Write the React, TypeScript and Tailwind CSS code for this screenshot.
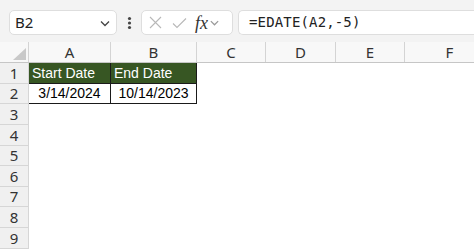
import React from "react";

const cols = [
  { l: "A", w: 82 },
  { l: "B", w: 86 },
  { l: "C", w: 69 },
  { l: "D", w: 70 },
  { l: "E", w: 69 },
  { l: "F", w: 90 },
];
const rowH = [21, 20, 21, 21, 20, 21, 20, 21, 21];

const ui = { fontFamily: '"Noto Sans", "Open Sans", sans-serif' };
const arial = { fontFamily: '"Liberation Sans", Arial, sans-serif' };

function Chevron({ c = "#555", s = 12 }: { c?: string; s?: number }) {
  return (
    <svg width={s} height={s} viewBox="0 0 12 12">
      <path d="M2 4.5 L6 8.5 L10 4.5" fill="none" stroke={c} strokeWidth="1.3" />
    </svg>
  );
}

export default function App() {
  return (
    <div className="w-[474px] h-[250px] overflow-hidden bg-white" style={ui}>
      {/* top bar */}
      <div className="h-[42px] bg-[#f3f3f3] flex items-start pt-[10px] pl-[9px]">
        <div className="w-[108px] h-[25px] bg-white border border-[#dedede] rounded-[5px] flex items-center justify-between pl-[5px] pr-[5px] text-[15px] text-[#222]">
          <span>B2</span>
          <Chevron c="#444" />
        </div>
        <div className="w-[24px] h-[25px] flex items-center justify-center">
          <svg width="5" height="14" viewBox="0 0 5 14">
            <circle cx="2.5" cy="2.5" r="1.6" fill="#444" />
            <circle cx="2.5" cy="7" r="1.6" fill="#444" />
            <circle cx="2.5" cy="11.5" r="1.6" fill="#444" />
          </svg>
        </div>
        <div className="w-[92px] h-[25px] bg-white border border-[#dedede] rounded-[5px] flex items-center pl-[7px]">
          <svg width="13" height="13" viewBox="0 0 13 13">
            <path d="M1 1 L12 12 M12 1 L1 12" stroke="#b8b8b8" strokeWidth="1.1" />
          </svg>
          <svg width="15" height="12" viewBox="0 0 15 12" className="ml-[10px]">
            <path d="M1 6.5 L5 10.5 L14 1.5" fill="none" stroke="#b8b8b8" strokeWidth="1.1" />
          </svg>
          <span
            className="ml-[8px] text-[18px] italic text-[#333] leading-none"
            style={{ fontFamily: '"Liberation Serif", "DejaVu Serif", serif' }}
          >
            fx
          </span>
          <span className="ml-[1px] flex items-center">
            <Chevron c="#999" s={11} />
          </span>
        </div>
        <div
          className="ml-[5px] flex-1 h-[25px] bg-white border border-r-0 border-[#dedede] rounded-l-[5px] flex items-center pl-[10px] text-[14px] text-[#222]"
          style={{ fontFamily: '"DejaVu Sans Mono", monospace', letterSpacing: "0.15px" }}
        >
          =EDATE(A2,-5)
        </div>
      </div>

      {/* column headers */}
      <div className="flex h-[21px] border-b border-[#c6c6c6] bg-[#f8f8f8] text-[15px] text-[#333]">
        <div className="w-[29px] shrink-0 border-r border-[#d4d4d4] flex items-end justify-end pr-[2px] pb-[2px]">
          <svg width="13" height="12" viewBox="0 0 13 12">
            <path d="M13 0 L13 12 L0 12 Z" fill="#c9c9c9" />
          </svg>
        </div>
        {cols.map((c) => (
          <div
            key={c.l}
            className="shrink-0 border-r border-[#d4d4d4] flex items-center justify-center leading-none"
            style={{ width: c.w }}
          >
            {c.l}
          </div>
        ))}
      </div>

      {/* rows */}
      {rowH.map((h, i) => {
        const r = i + 1;
        return (
          <div key={r} className="flex" style={{ height: h }}>
            <div className="w-[29px] shrink-0 bg-[#f0f0f0] border-r border-b border-[#d6d6d6] flex items-center justify-center text-[15px] text-[#333] leading-none">
              {r}
            </div>
            {r === 1 && (
              <>
                <div
                  className="w-[82px] shrink-0 bg-[#375623] text-white text-[14px] flex items-center pl-[3px] border-r border-b border-[#1a1a1a]"
                  style={arial}
                >
                  Start Date
                </div>
                <div
                  className="w-[86px] shrink-0 bg-[#375623] text-white text-[14px] flex items-center pl-[3px] border-r border-b border-[#1a1a1a]"
                  style={arial}
                >
                  End Date
                </div>
              </>
            )}
            {r === 2 && (
              <>
                <div
                  className="w-[82px] shrink-0 text-black text-[14px] flex items-center justify-center border-r border-b border-[#1a1a1a]"
                  style={arial}
                >
                  3/14/2024
                </div>
                <div
                  className="w-[86px] shrink-0 text-black text-[14px] flex items-center justify-center border-r border-b border-[#1a1a1a]"
                  style={arial}
                >
                  10/14/2023
                </div>
              </>
            )}
          </div>
        );
      })}
    </div>
  );
}
